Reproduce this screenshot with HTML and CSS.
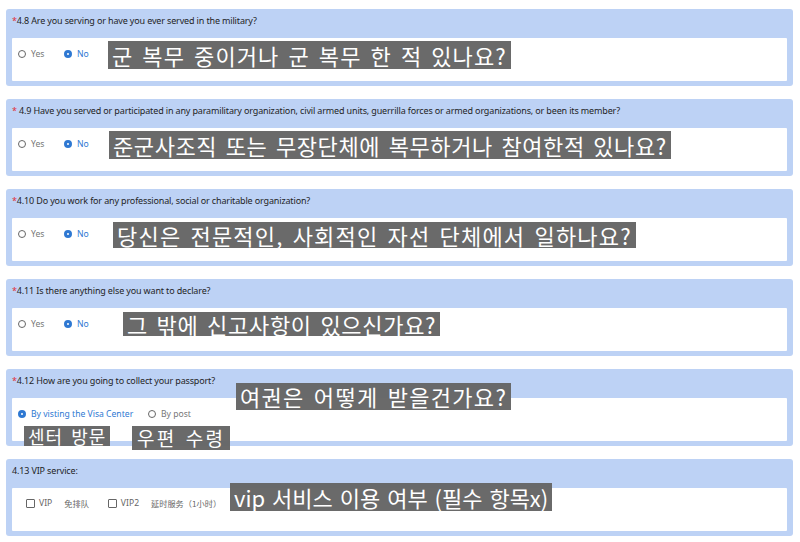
FILE: index.html
```html
<!DOCTYPE html>
<html lang="en">
<head>
<meta charset="utf-8">
<link rel="stylesheet" href="styles.css">
</head>
<body>
<div class="page">
  <section class="q">
    <div class="q-title"><span class="req">*</span>4.8 Are you serving or have you ever served in the military?</div>
    <div class="q-body">
      <label class="opt"><span class="radio"></span>Yes</label>
      <label class="opt on"><span class="radio"></span>No</label>
    </div>
    <div class="note n1">군 복무 중이거나 군 복무 한 적 있나요?</div>
  </section>

  <section class="q">
    <div class="q-title"><span class="req">*</span> 4.9 Have you served or participated in any paramilitary organization, civil armed units, guerrilla forces or armed organizations, or been its member?</div>
    <div class="q-body">
      <label class="opt"><span class="radio"></span>Yes</label>
      <label class="opt on"><span class="radio"></span>No</label>
    </div>
    <div class="note n2">준군사조직 또는 무장단체에 복무하거나 참여한적 있나요?</div>
  </section>

  <section class="q">
    <div class="q-title"><span class="req">*</span>4.10 Do you work for any professional, social or charitable organization?</div>
    <div class="q-body">
      <label class="opt"><span class="radio"></span>Yes</label>
      <label class="opt on"><span class="radio"></span>No</label>
    </div>
    <div class="note n3">당신은 전문적인, 사회적인 자선 단체에서 일하나요?</div>
  </section>

  <section class="q">
    <div class="q-title"><span class="req">*</span>4.11 Is there anything else you want to declare?</div>
    <div class="q-body">
      <label class="opt"><span class="radio"></span>Yes</label>
      <label class="opt on"><span class="radio"></span>No</label>
    </div>
    <div class="note n4">그 밖에 신고사항이 있으신가요?</div>
  </section>

  <section class="q">
    <div class="q-title"><span class="req">*</span>4.12 How are you going to collect your passport?</div>
    <div class="q-body">
      <label class="opt on wide"><span class="radio"></span>By visting the Visa Center</label>
      <label class="opt post"><span class="radio"></span>By post</label>
    </div>
    <div class="note n5">여권은 어떻게 받을건가요?</div>
    <div class="note small n6">센터 방문</div>
    <div class="note small n7">우편 수령</div>
  </section>

  <section class="q">
    <div class="q-title">4.13 VIP service:</div>
    <div class="q-body vip">
      <label class="chk"><span class="box"></span>VIP<span class="cn">免排队</span></label>
      <label class="chk"><span class="box"></span>VIP2<span class="cn">延时服务（1小时）</span></label>
    </div>
    <div class="note n8">vip 서비스 이용 여부 (필수 항목x)</div>
  </section>
</div>
</body>
</html>
```

FILE: styles.css
```css
* { box-sizing: border-box; margin: 0; padding: 0; }
html, body { background: #fff; }
body {
  font-family: "Noto Sans", "Noto Sans CJK SC", sans-serif;
  color: #333;
}
.page {
  display: flex;
  flex-direction: column;
  gap: 13px;
  padding: 9px 7px 0 6px;
}
.q {
  position: relative;
  height: 77px;
  background: #bdd2f5;
  border-radius: 3px;
  padding: 0 6px 5px;
  display: flex;
  flex-direction: column;
}
.q-title {
  height: 29px;
  padding: 6px 0 0 0;
  font-size: 9px;
  line-height: 11px;
  letter-spacing: -0.15px;
  color: #1f1f1f;
  white-space: nowrap;
}
.req { color: #e0303a; }
.q-body {
  flex: 1;
  background: #fff;
  border-radius: 1px;
  display: flex;
  align-items: flex-start;
  padding: 11px 0 0 6px;
}
.opt {
  display: flex;
  align-items: center;
  height: 10px;
  font-size: 8.6px;
  color: #777;
  width: 46px;
}
.opt.wide { width: 130px; }
.opt.on { color: #2e78d2; }
.radio {
  width: 8px;
  height: 8px;
  border: 1px solid #666;
  border-radius: 50%;
  margin-right: 5px;
  flex: none;
  background: #fff;
}
.opt.on .radio {
  border: 3px solid #2e78d2;
  background: #fff;
}
.q-body.vip { padding: 10px 0 0 14px; }
.chk {
  display: flex;
  align-items: center;
  height: 10px;
  font-size: 8.6px;
  color: #666;
  margin-right: 19px;
}
.box {
  width: 9px;
  height: 9px;
  border: 1px solid #666;
  border-radius: 1px;
  margin-right: 4px;
  flex: none;
}
.cn {
  font-family: "Noto Sans CJK SC", sans-serif;
  font-size: 8.2px;
  margin-left: 12px;
  color: #666;
}
.note {
  position: absolute;
  background: rgba(100, 100, 100, 0.96);
  color: #fff;
  font-family: "Noto Sans CJK KR", sans-serif;
  font-size: 22px;
  line-height: 28px;
  height: 28px;
  padding: 0 4px;
  white-space: nowrap;
  word-spacing: 3px;
  letter-spacing: 0.7px;
}
.note.small { font-size: 18px; line-height: 20px; height: 20px; padding: 0 4px; letter-spacing: 1px; }
.n1 { left: 102px; top: 32px; letter-spacing: 1.1px; }
.n2 { left: 103px; top: 32px; letter-spacing: 0.6px; }
.n3 { left: 107px; top: 33px; height: 26px; line-height: 26px; letter-spacing: 1.2px; }
.n4 { left: 117px; top: 33px; height: 24px; line-height: 24px; }
.n5 { left: 230px; top: 14px; height: 27px; line-height: 27px; letter-spacing: 1.3px; }
.n6 { left: 18px; top: 57px; }
.note.small.n7 { left: 126px; top: 57px; height: 24px; line-height: 23px; padding: 0 5px; font-size: 19px; letter-spacing: 2.2px; }
.n8 { left: 224px; top: 24px; letter-spacing: 0; word-spacing: 2px; }
```
